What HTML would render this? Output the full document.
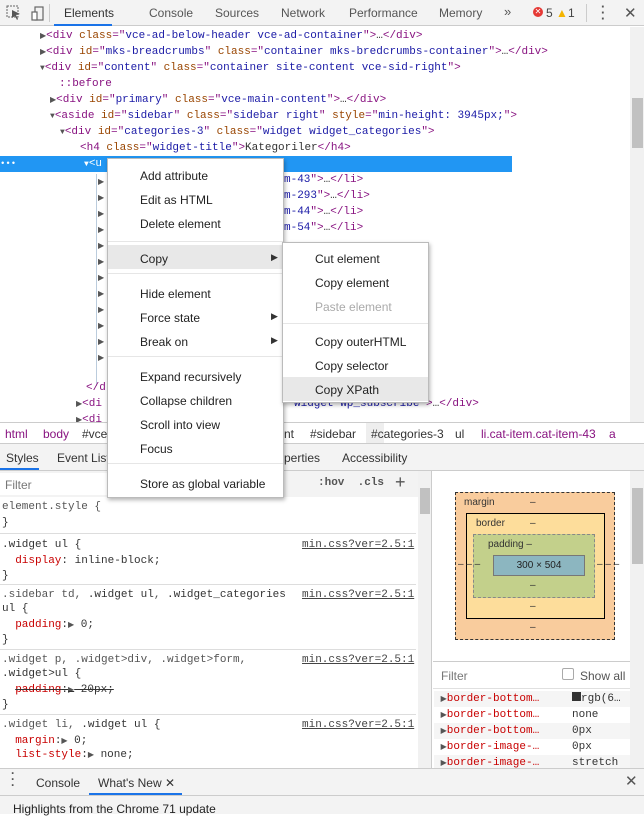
<!DOCTYPE html>
<html><head><style>
*{margin:0;padding:0;box-sizing:border-box}
body{width:644px;height:814px;overflow:hidden;background:#fff;font-family:"Liberation Sans",sans-serif;font-size:12px;color:#333;position:relative}
.a{position:absolute}
.m{font-family:"Liberation Mono",monospace;font-size:11px;white-space:pre}
.t{color:#881280}.n{color:#994500}.v{color:#1a1aa6}.g{color:#555}
.row{position:absolute;height:16px;line-height:16px}
.tri{font-size:8px;color:#555}
.mi{position:absolute;left:32px;font-size:12px;color:#222}
.sep{position:absolute;left:0;right:0;height:1px;background:#e6e6e6}
.cp{color:#c80000}
.lk{position:absolute;left:302px;text-decoration:underline;color:#444}
.hl{position:absolute;left:0;width:416px;height:1px;background:#ddd}
.cr{position:absolute;left:0;width:196px;height:16px;line-height:16px}
</style></head><body>
<!-- top tab bar -->
<div class="a" style="left:0;top:0;width:644px;height:26px;background:#f3f3f3;border-bottom:1px solid #ccc"></div>
<svg class="a" style="left:6px;top:5px" width="40" height="16"><rect x="1" y="1" width="11" height="11" fill="none" stroke="#666" stroke-dasharray="2 1"/><path d="M6 5 L14 9 L10 10 L12 14 L11 15 L9 11 L6 13Z" fill="#555"/><rect x="29" y="2" width="8" height="13" fill="none" stroke="#666" stroke-width="1.2"/><rect x="26" y="7" width="5" height="8" fill="#fff" stroke="#666" stroke-width="1.2"/></svg>
<div class="a" style="left:49px;top:4px;width:1px;height:18px;background:#ccc"></div>
<div class="a" style="left:54px;top:0;width:58px;height:26px;border-bottom:2px solid #1a73e8"></div>
<div class="a" style="top:6px;left:64px;color:#333">Elements</div>
<div class="a" style="top:6px;left:149px;color:#555">Console</div>
<div class="a" style="top:6px;left:215px;color:#555">Sources</div>
<div class="a" style="top:6px;left:281px;color:#555">Network</div>
<div class="a" style="top:6px;left:349px;color:#555">Performance</div>
<div class="a" style="top:6px;left:439px;color:#555">Memory</div>
<div class="a" style="top:4px;left:504px;color:#555;font-size:13px">»</div>
<div class="a" style="top:7px;left:533px;width:10px;height:10px;border-radius:50%;background:#e53935;color:#fff;font-size:8px;line-height:10px;text-align:center">✕</div>
<div class="a" style="top:6px;left:546px;color:#444">5</div>
<div class="a" style="top:6px;left:556px;color:#f4b400;font-size:12px">▲</div>
<div class="a" style="top:6px;left:568px;color:#444">1</div>
<div class="a" style="left:586px;top:4px;width:1px;height:18px;background:#ccc"></div>
<div class="a" style="top:4px;left:601px;color:#555;font-weight:bold;font-size:13px;line-height:6px">·<br>·<br>·</div>
<div class="a" style="top:4px;left:624px;color:#555;font-size:15px">✕</div>

<!-- DOM tree -->
<div class="a" style="left:0;top:27px;width:630px;height:395px;overflow:hidden">
<div class="row m" style="top:1px;left:40px"><span class="tri">▶</span><span class="t">&lt;div </span><span class="n">class</span><span class="t">="</span><span class="v">vce-ad-below-header vce-ad-container</span><span class="t">"&gt;</span>…<span class="t">&lt;/div&gt;</span></div>
<div class="row m" style="top:17px;left:40px"><span class="tri">▶</span><span class="t">&lt;div </span><span class="n">id</span><span class="t">="</span><span class="v">mks-breadcrumbs</span><span class="t">" </span><span class="n">class</span><span class="t">="</span><span class="v">container mks-bredcrumbs-container</span><span class="t">"&gt;</span>…<span class="t">&lt;/div&gt;</span></div>
<div class="row m" style="top:33px;left:40px"><span class="tri">▼</span><span class="t">&lt;div </span><span class="n">id</span><span class="t">="</span><span class="v">content</span><span class="t">" </span><span class="n">class</span><span class="t">="</span><span class="v">container site-content vce-sid-right</span><span class="t">"&gt;</span></div>
<div class="row m t" style="top:49px;left:59px">::before</div>
<div class="row m" style="top:65px;left:50px"><span class="tri">▶</span><span class="t">&lt;div </span><span class="n">id</span><span class="t">="</span><span class="v">primary</span><span class="t">" </span><span class="n">class</span><span class="t">="</span><span class="v">vce-main-content</span><span class="t">"&gt;</span>…<span class="t">&lt;/div&gt;</span></div>
<div class="row m" style="top:81px;left:50px"><span class="tri">▼</span><span class="t">&lt;aside </span><span class="n">id</span><span class="t">="</span><span class="v">sidebar</span><span class="t">" </span><span class="n">class</span><span class="t">="</span><span class="v">sidebar right</span><span class="t">" </span><span class="n">style</span><span class="t">="</span><span class="v">min-height: 3945px;</span><span class="t">"&gt;</span></div>
<div class="row m" style="top:97px;left:60px"><span class="tri">▼</span><span class="t">&lt;div </span><span class="n">id</span><span class="t">="</span><span class="v">categories-3</span><span class="t">" </span><span class="n">class</span><span class="t">="</span><span class="v">widget widget_categories</span><span class="t">"&gt;</span></div>
<div class="row m" style="top:113px;left:80px"><span class="t">&lt;h4 </span><span class="n">class</span><span class="t">="</span><span class="v">widget-title</span><span class="t">"&gt;</span>Kategoriler<span class="t">&lt;/h4&gt;</span></div>
<div class="a" style="top:129px;left:0;width:512px;height:16px;background:#2196f3"></div>
<div class="row m" style="top:129px;left:0;color:#fff;font-size:9px">•••</div>
<div class="row m" style="top:129px;left:84px;color:#fff"><span class="tri" style="color:#fff">▼</span>&lt;u</div>
<div class="a" style="left:96px;top:147px;width:1px;height:212px;background:#bcd"></div>
<div class="row m" style="top:145px;left:284px"><span class="v">m-43</span><span class="t">"&gt;</span>…<span class="t">&lt;/li&gt;</span></div>
<div class="row m" style="top:161px;left:284px"><span class="v">m-293</span><span class="t">"&gt;</span>…<span class="t">&lt;/li&gt;</span></div>
<div class="row m" style="top:177px;left:284px"><span class="v">m-44</span><span class="t">"&gt;</span>…<span class="t">&lt;/li&gt;</span></div>
<div class="row m" style="top:193px;left:284px"><span class="v">m-54</span><span class="t">"&gt;</span>…<span class="t">&lt;/li&gt;</span></div>
<div class="row m t" style="top:353px;left:86px">&lt;/d</div>
<div class="row m" style="top:369px;left:76px"><span class="tri">▶</span><span class="t">&lt;di</span></div>
<div class="row m" style="top:369px;left:294px"><span class="v">widget wp_subscribe</span><span class="t">"&gt;</span>…<span class="t">&lt;/div&gt;</span></div>
<div class="row m" style="top:385px;left:76px"><span class="tri">▶</span><span class="t">&lt;di</span></div>
</div>
<div class="a tri" style="left:98px;top:174px;line-height:16px">▶<br>▶<br>▶<br>▶<br>▶<br>▶<br>▶<br>▶<br>▶<br>▶<br>▶<br>▶</div>
<div class="a" style="left:630px;top:27px;width:14px;height:395px;background:#f1f1f1"></div>
<div class="a" style="left:632px;top:98px;width:11px;height:50px;background:#c1c1c1"></div>

<!-- breadcrumbs -->
<div class="a" style="left:0;top:422px;width:644px;height:22px;border-top:1px solid #ccc;border-bottom:1px solid #ccc;background:#fff"></div>
<div class="a" style="left:366px;top:423px;width:18px;height:20px;background:#eee"></div>
<div class="a" style="top:427px;left:5px;color:#881280">html</div>
<div class="a" style="top:427px;left:43px;color:#881280">body</div>
<div class="a" style="top:427px;left:82px">#vce</div>
<div class="a" style="top:427px;left:284px">nt</div>
<div class="a" style="top:427px;left:310px">#sidebar</div>
<div class="a" style="top:427px;left:371px">#categories-3</div>
<div class="a" style="top:427px;left:455px">ul</div>
<div class="a" style="top:427px;left:481px;color:#881280">li.cat-item.cat-item-43</div>
<div class="a" style="top:427px;left:609px;color:#881280">a</div>

<!-- styles tabs -->
<div class="a" style="left:0;top:444px;width:644px;height:27px;background:#f3f3f3;border-bottom:1px solid #ccc"></div>
<div class="a" style="left:0;top:468px;width:39px;height:2px;background:#1a73e8"></div>
<div class="a" style="top:451px;left:6px">Styles</div>
<div class="a" style="top:451px;left:57px">Event List</div>
<div class="a" style="top:451px;left:284px">perties</div>
<div class="a" style="top:451px;left:342px">Accessibility</div>
<!-- filter -->
<div class="a" style="left:0;top:471px;width:418px;height:26px;background:#f3f3f3"></div>
<div class="a" style="left:0;top:473px;width:250px;height:22px;background:#fff"></div>
<div class="a" style="top:478px;left:5px;color:#777">Filter</div>
<div class="a m" style="top:477px;left:318px;font-weight:bold;color:#555">:hov  .cls</div>
<div class="a" style="top:472px;left:395px;font-size:18px;color:#555">+</div>
<!-- styles rules -->
<div class="a m" style="left:0;top:497px;width:418px;height:271px;overflow:hidden">
<div class="row g" style="left:2px;top:2px">element.style {</div>
<div class="row" style="left:2px;top:18px">}</div>
<div class="hl" style="top:36px"></div>
<div class="row" style="left:2px;top:40px">.widget ul {</div><div class="row lk" style="top:40px">min.css?ver=2.5:1</div>
<div class="row" style="left:2px;top:56px">  <span class="cp">display</span>: inline-block;</div>
<div class="row" style="left:2px;top:71px">}</div>
<div class="hl" style="top:87px"></div>
<div class="row" style="left:2px;top:90px"><span class="g">.sidebar td, </span>.widget ul<span class="g">, </span>.widget_categories</div><div class="row lk" style="top:90px">min.css?ver=2.5:1</div>
<div class="row" style="left:2px;top:104px">ul {</div>
<div class="row" style="left:2px;top:120px">  <span class="cp">padding</span>:<span class="tri">▶</span> 0;</div>
<div class="row" style="left:2px;top:135px">}</div>
<div class="hl" style="top:152px"></div>
<div class="row" style="left:2px;top:155px"><span class="g">.widget p, .widget&gt;div, .widget&gt;form,</span></div><div class="row lk" style="top:155px">min.css?ver=2.5:1</div>
<div class="row" style="left:2px;top:169px">.widget&gt;ul {</div>
<div class="row" style="left:2px;top:185px">  <s><span class="cp">padding</span>:<span class="tri">▶</span> 20px;</s></div>
<div class="row" style="left:2px;top:200px">}</div>
<div class="hl" style="top:217px"></div>
<div class="row" style="left:2px;top:220px"><span class="g">.widget li, </span>.widget ul {</div><div class="row lk" style="top:220px">min.css?ver=2.5:1</div>
<div class="row" style="left:2px;top:236px">  <span class="cp">margin</span>:<span class="tri">▶</span> 0;</div>
<div class="row" style="left:2px;top:250px">  <span class="cp">list-style</span>:<span class="tri">▶</span> none;</div>
</div>
<div class="a" style="left:418px;top:471px;width:14px;height:297px;background:#f1f1f1;border-right:1px solid #ccc"></div>
<div class="a" style="left:420px;top:488px;width:10px;height:26px;background:#c1c1c1"></div>

<!-- box model -->
<div class="a" style="left:455px;top:492px;width:160px;height:148px;background:#f9cc9d;border:1px dashed #333"></div>
<div class="a" style="left:466px;top:513px;width:139px;height:106px;background:#fddd9b;border:1px solid #000"></div>
<div class="a" style="left:473px;top:534px;width:122px;height:64px;background:#c3d08b;border:1px dashed #888"></div>
<div class="a" style="left:493px;top:555px;width:92px;height:21px;background:#8cb6c0;border:1px solid #777;font-size:10px;text-align:center;line-height:19px;color:#222">300 × 504</div>
<div class="a" style="left:464px;top:497px;font-size:10px">margin</div>
<div class="a" style="left:476px;top:518px;font-size:10px">border</div>
<div class="a" style="left:488px;top:539px;font-size:10px">padding –</div>
<div class="a" style="left:530px;top:497px;font-size:10px">–</div>
<div class="a" style="left:530px;top:518px;font-size:10px">–</div>
<div class="a" style="left:530px;top:580px;font-size:10px">–</div>
<div class="a" style="left:530px;top:601px;font-size:10px">–</div>
<div class="a" style="left:530px;top:622px;font-size:10px">–</div>
<div class="a" style="left:458px;top:559px;font-size:10px;white-space:pre">– – –</div>
<div class="a" style="left:597px;top:559px;font-size:10px;white-space:pre">– – –</div>
<div class="a" style="left:433px;top:661px;width:197px;height:1px;background:#ccc"></div>
<div class="a" style="left:441px;top:669px;color:#777">Filter</div>
<div class="a" style="left:562px;top:668px;width:12px;height:12px;border:1px solid #aaa;border-radius:2px"></div>
<div class="a" style="left:580px;top:669px;color:#555">Show all</div>
<div class="a" style="left:433px;top:688px;width:197px;height:1px;background:#e0e0e0"></div>
<div class="a m" style="left:434px;top:691px;width:196px;height:77px;overflow:hidden">
<div class="cr" style="top:0;background:#f5f5f5"> <span class="tri">▶</span><span class="cp">border-bottom…</span></div><div class="cr" style="top:0;left:138px"><span style="display:inline-block;width:9px;height:9px;background:#333"></span>rgb(6…</div>
<div class="cr" style="top:16px"> <span class="tri">▶</span><span class="cp">border-bottom…</span></div><div class="cr" style="top:16px;left:138px">none</div>
<div class="cr" style="top:32px;background:#f5f5f5"> <span class="tri">▶</span><span class="cp">border-bottom…</span></div><div class="cr" style="top:32px;left:138px">0px</div>
<div class="cr" style="top:48px"> <span class="tri">▶</span><span class="cp">border-image-…</span></div><div class="cr" style="top:48px;left:138px">0px</div>
<div class="cr" style="top:64px;background:#f5f5f5"> <span class="tri">▶</span><span class="cp">border-image-…</span></div><div class="cr" style="top:64px;left:138px">stretch</div>
</div>
<div class="a" style="left:630px;top:471px;width:14px;height:297px;background:#f1f1f1"></div>
<div class="a" style="left:632px;top:488px;width:11px;height:76px;background:#c1c1c1"></div>

<!-- drawer -->
<div class="a" style="left:0;top:768px;width:644px;height:28px;background:#f3f3f3;border-top:1px solid #ccc;border-bottom:1px solid #ccc"></div>
<div class="a" style="top:770px;left:11px;font-weight:bold;color:#555;line-height:6px">·<br>·<br>·</div>
<div class="a" style="top:776px;left:36px">Console</div>
<div class="a" style="top:776px;left:98px">What's New ✕</div>
<div class="a" style="left:89px;top:793px;width:93px;height:2px;background:#1a73e8"></div>
<div class="a" style="top:772px;left:625px;font-size:15px;color:#555">✕</div>
<div class="a" style="left:0;top:796px;width:644px;height:18px;background:#f3f3f3"></div>
<div class="a" style="top:802px;left:13px;color:#222">Highlights from the Chrome 71 update</div>

<!-- context menu -->
<div class="a" style="left:107px;top:158px;width:177px;height:340px;background:#fff;border:1px solid #bbb;box-shadow:1px 2px 4px rgba(0,0,0,.3)">
<div class="mi" style="top:10px">Add attribute</div>
<div class="mi" style="top:34px">Edit as HTML</div>
<div class="mi" style="top:58px">Delete element</div>
<div class="sep" style="top:82px"></div>
<div class="a" style="left:0;top:86px;width:175px;height:24px;background:#e8e8e8"></div>
<div class="mi" style="top:93px">Copy</div><div class="a" style="left:163px;top:93px;font-size:9px">▶</div>
<div class="sep" style="top:114px"></div>
<div class="mi" style="top:128px">Hide element</div>
<div class="mi" style="top:152px">Force state</div><div class="a" style="left:163px;top:152px;font-size:9px">▶</div>
<div class="mi" style="top:176px">Break on</div><div class="a" style="left:163px;top:176px;font-size:9px">▶</div>
<div class="sep" style="top:197px"></div>
<div class="mi" style="top:211px">Expand recursively</div>
<div class="mi" style="top:235px">Collapse children</div>
<div class="mi" style="top:259px">Scroll into view</div>
<div class="mi" style="top:283px">Focus</div>
<div class="sep" style="top:304px"></div>
<div class="mi" style="top:318px">Store as global variable</div>
</div>
<div class="a" style="left:282px;top:242px;width:147px;height:161px;background:#fff;border:1px solid #bbb;box-shadow:1px 2px 4px rgba(0,0,0,.3)">
<div class="mi" style="top:9px">Cut element</div>
<div class="mi" style="top:33px">Copy element</div>
<div class="mi" style="top:57px;color:#aaa">Paste element</div>
<div class="sep" style="top:80px"></div>
<div class="mi" style="top:92px">Copy outerHTML</div>
<div class="mi" style="top:116px">Copy selector</div>
<div class="a" style="left:0;top:134px;width:145px;height:24px;background:#e8e8e8"></div>
<div class="mi" style="top:140px">Copy XPath</div>
</div>
</body></html>
